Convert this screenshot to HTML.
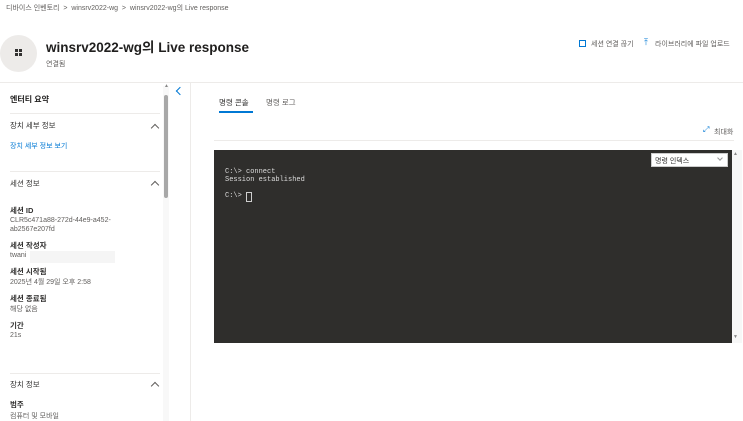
<!DOCTYPE html>
<html><head><meta charset="utf-8"><style>
*{margin:0;padding:0;box-sizing:border-box}
body{width:743px;height:421px;overflow:hidden;background:#fff;font-family:"Liberation Sans","Noto Sans CJK KR",sans-serif;color:#323130;position:relative}
.a{position:absolute;white-space:nowrap}
.s{font-size:7px;color:#605e5c}
.lb{font-size:7.5px;font-weight:bold;color:#323130}
.v{font-size:7px;color:#605e5c}
.hr{position:absolute;height:1px;background:#edebe9}
.chev{position:absolute;width:6px;height:6px;border-left:1px solid #605e5c;border-top:1px solid #605e5c;transform:rotate(45deg)}
.mono{font-family:"Liberation Mono",monospace;font-size:7px;color:#dcdcdc}
</style></head><body>
<div class="a s" style="left:6px;top:3px">디바이스 인벤토리 &nbsp;&gt;&nbsp; winsrv2022-wg &nbsp;&gt;&nbsp; winsrv2022-wg의 Live response</div>
<div class="a" style="left:0;top:35px;width:37px;height:37px;border-radius:50%;background:#edebe9"></div>
<svg class="a" style="left:15px;top:49px" width="7" height="7"><rect x="0" y="0" width="3" height="3" fill="#323130"/><rect x="4" y="0" width="3" height="3" fill="#323130"/><rect x="0" y="4" width="3" height="3" fill="#323130"/><rect x="4" y="4" width="3" height="3" fill="#323130"/></svg>
<div class="a" style="left:46px;top:36px;font-size:13.5px;font-weight:bold;color:#201f1e">winsrv2022-wg의 Live response</div>
<div class="a s" style="left:46px;top:59px">연결됨</div>
<div class="a" style="left:579px;top:40px;width:7px;height:7px;border:1px solid #0078d4"></div>
<div class="a s" style="left:591px;top:39px">세션 연결 끊기</div>
<div class="a" style="left:644px;top:37px;font-size:9px;color:#0078d4">⤒</div>
<div class="a s" style="left:655px;top:39px">라이브러리에 파일 업로드</div>
<div class="hr" style="left:0;top:82px;width:743px"></div>
<div class="a" style="left:190px;top:83px;width:1px;height:338px;background:#edebe9"></div>
<div class="a" style="left:163px;top:86px;width:6px;height:335px;background:#f8f8f8"></div>
<div class="a" style="left:164px;top:95px;width:4px;height:103px;background:#a8a8a8;border-radius:2px"></div>
<div class="a" style="left:164px;top:83px;font-size:5px;color:#888">▲</div>
<div class="chev" style="left:177px;top:88px;transform:rotate(-45deg);border-color:#0078d4"></div>
<div class="a" style="left:10px;top:94px;font-size:8px;font-weight:bold;color:#201f1e">엔터티 요약</div>
<div class="hr" style="left:10px;top:113px;width:150px"></div>
<div class="a s" style="left:10px;top:120px;font-size:7.5px;color:#323130">장치 세부 정보</div>
<div class="chev" style="left:152px;top:125px"></div>
<div class="a" style="left:10px;top:141px;font-size:7px;color:#0078d4">장치 세부 정보 보기</div>
<div class="hr" style="left:10px;top:171px;width:150px"></div>
<div class="a s" style="left:10px;top:178px;font-size:7.5px;color:#323130">세션 정보</div>
<div class="chev" style="left:152px;top:182px"></div>
<div class="a lb" style="left:10px;top:205px">세션 ID</div>
<div class="a v" style="left:10px;top:216px;line-height:9px">CLR5c471a88-272d-44e9-a452-<br>ab2567e207fd</div>
<div class="a lb" style="left:10px;top:240px">세션 작성자</div>
<div class="a v" style="left:10px;top:252px">twani</div>
<div class="a" style="left:30px;top:251px;width:85px;height:12px;background:#f5f5f5"></div>
<div class="a lb" style="left:10px;top:266px">세션 시작됨</div>
<div class="a v" style="left:10px;top:277px">2025년 4월 29일 오후 2:58</div>
<div class="a lb" style="left:10px;top:293px">세션 종료됨</div>
<div class="a v" style="left:10px;top:304px">해당 없음</div>
<div class="a lb" style="left:10px;top:320px">기간</div>
<div class="a v" style="left:10px;top:332px">21s</div>
<div class="hr" style="left:10px;top:373px;width:150px"></div>
<div class="a s" style="left:10px;top:379px;font-size:7.5px;color:#323130">장치 정보</div>
<div class="chev" style="left:152px;top:383px"></div>
<div class="a lb" style="left:10px;top:399px">범주</div>
<div class="a v" style="left:10px;top:411px">컴퓨터 및 모바일</div>
<div class="a" style="left:219px;top:97px;font-size:7.5px;color:#323130">명령 콘솔</div>
<div class="a" style="left:219px;top:111px;width:34px;height:2px;background:#0078d4"></div>
<div class="a s" style="left:266px;top:97px;font-size:7.5px">명령 로그</div>
<div class="hr" style="left:214px;top:140px;width:520px"></div>
<div class="a" style="left:703px;top:125px;font-size:8px;color:#0078d4">⤢</div>
<div class="a s" style="left:714px;top:127px">최대화</div>
<div class="a" style="left:214px;top:150px;width:518px;height:193px;background:#2f2e2c"></div>
<div class="a" style="left:732px;top:150px;width:10px;height:193px;background:#f7f7f7"></div>
<div class="a" style="left:733px;top:151px;font-size:5px;color:#888">▲</div>
<div class="a" style="left:733px;top:334px;font-size:5px;color:#888">▼</div>
<div class="a" style="left:651px;top:153px;width:77px;height:14px;background:#fff;border:1px solid #ccc"></div>
<div class="a s" style="left:655px;top:156px;color:#323130">명령 인덱스</div>
<div class="chev" style="left:718px;top:156px;width:4px;height:4px;transform:rotate(225deg);border-color:#999"></div>
<div class="a mono" style="left:225px;top:168px;line-height:8px">C:\&gt; connect<br>Session established</div>
<div class="a mono" style="left:225px;top:192px">C:\&gt;</div>
<div class="a" style="left:246px;top:192px;width:6px;height:10px;border:1px solid #cfcfcf"></div>
</body></html>
